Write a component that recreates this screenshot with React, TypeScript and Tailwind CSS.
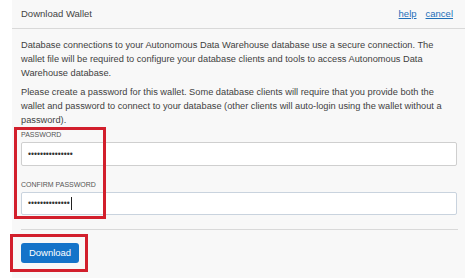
import React from "react";

export default function App() {
  const font = { fontFamily: '"Liberation Sans", Arial, sans-serif' };
  return (
    <div className="relative w-[474px] h-[278px] bg-white overflow-hidden text-[#3f3f3f]" style={font}>
      <div className="ml-[12px] w-[453px] h-[278px] bg-[#f8f8f8]">
        <div className="h-[29px] flex items-center justify-between pl-[9px] pr-[12px] border-b border-[#d9d9d9]">
          <span className="text-[9.5px] text-[#444]">Download Wallet</span>
          <div className="flex gap-[9px] text-[9.5px] text-[#1f6fb8]">
            <span className="underline">help</span>
            <span className="underline">cancel</span>
          </div>
        </div>
        <div className="pl-[9px] pr-[7px] pt-[9px]">
          <p className="text-[9.25px] leading-[14px] mb-[5px] whitespace-nowrap">
            <span className="block">Database connections to your Autonomous Data Warehouse database use a secure connection. The</span>
            <span className="block">wallet file will be required to configure your database clients and tools to access Autonomous Data</span>
            <span className="block">Warehouse database.</span>
          </p>
          <p className="text-[9.25px] leading-[14px] whitespace-nowrap">
            <span className="block">Please create a password for this wallet. Some database clients will require that you provide both the</span>
            <span className="block">wallet and password to connect to your database (other clients will auto-login using the wallet without a</span>
            <span className="block">password).</span>
          </p>
          <div className="mt-[2px] text-[7px] leading-[12px] text-[#555]">PASSWORD</div>
          <div className="mt-[1px] h-[24px] w-[436px] bg-white border border-[#cfcfcf] rounded-[2px] flex items-center pl-[6px] text-[8.5px] text-[#333]">
            •••••••••••••••
          </div>
          <div className="mt-[13px] text-[7px] leading-[12px] text-[#555]">CONFIRM PASSWORD</div>
          <div className="mt-[1px] h-[23px] w-[436px] bg-white border border-[#c9d3de] rounded-[2px] flex items-center pl-[6px] text-[8.5px] text-[#333]">
            ••••••••••••••<span className="ml-[1px] inline-block w-px h-[13px] bg-[#222]"></span>
          </div>
          <div className="mt-[14px] w-[437px] border-t border-[#d9d9d9]"></div>
          <div className="mt-[13px] w-[58px] h-[20px] rounded-[3px] bg-[#1473c9] text-white text-[9.5px] flex items-center justify-center">
            Download
          </div>
        </div>
      </div>
      <div className="absolute left-[14px] top-[127px] w-[92px] h-[92px] border-[3px] border-[#d21f2c]"></div>
      <div className="absolute left-[10px] top-[234px] w-[78px] h-[38px] border-[3px] border-[#d21f2c]"></div>
    </div>
  );
}
